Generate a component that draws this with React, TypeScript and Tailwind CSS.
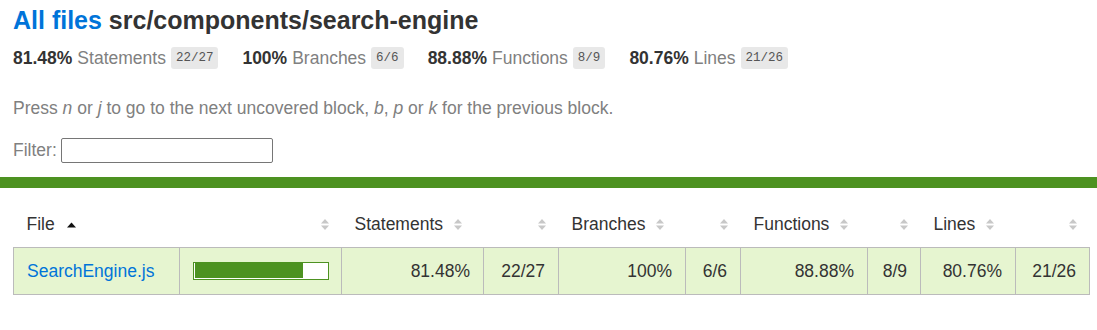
import React from "react";

function Sorter() {
  return (
    <svg width="8" height="13" viewBox="0 0 8 13" className="inline-block align-middle">
      <path d="M0 5.5 L4 1 L8 5.5 Z" fill="#c8c8c8" />
      <path d="M0 7.5 L4 12 L8 7.5 Z" fill="#c8c8c8" />
    </svg>
  );
}

function SortedUp() {
  return (
    <svg width="9" height="6" viewBox="0 0 9 6" className="inline-block align-middle">
      <path d="M0 5.5 L4.5 0.5 L9 5.5 Z" fill="#111" />
    </svg>
  );
}

function Badge({ children }: { children: React.ReactNode }) {
  return (
    <span className="ml-[5px] inline-block rounded-[3px] bg-[#e8e8e8] px-[5px] py-[4px] align-middle text-[12.5px] leading-[14px] text-[#555] [font-family:'Liberation_Mono',monospace]">
      {children}
    </span>
  );
}

function Stat({ pct, label, frac }: { pct: string; label: string; frac: string }) {
  return (
    <div className="mr-[24px] flex items-center whitespace-nowrap">
      <span className="font-bold text-[#333]">{pct}</span>
      <span className="ml-[5px] text-[#808080]">{label}</span>
      <Badge>{frac}</Badge>
    </div>
  );
}

export default function App() {
  const td = "border border-[#bbb] px-[13px] pt-[14px] pb-[13px] leading-[19px]";
  const th = "px-[13px] pt-[14px] pb-[13px] font-normal leading-[19px] whitespace-nowrap";
  return (
    <div className="w-[1097px] h-[330px] overflow-hidden bg-white text-[#333] [font-family:'Liberation_Sans',Arial,sans-serif]">
      <div className="px-[13px] pt-[6px]">
        <h1 className="text-[25px] font-bold leading-[28px] text-[#333]">
          <a className="text-[#0074d9]">All files</a> src/components/search-engine
        </h1>
        <div className="mt-[11px] flex items-center text-[17.5px]">
          <Stat pct="81.48%" label="Statements" frac="22/27" />
          <Stat pct="100%" label="Branches" frac="6/6" />
          <Stat pct="88.88%" label="Functions" frac="8/9" />
          <Stat pct="80.76%" label="Lines" frac="21/26" />
        </div>
        <p className="mt-[27px] text-[17.5px] leading-[20px] text-[#808080]">
          Press <em>n</em> or <em>j</em> to go to the next uncovered block, <em>b</em>, <em>p</em> or{" "}
          <em>k</em> for the previous block.
        </p>
        <div className="mt-[19px] flex items-center text-[17.5px] text-[#808080]">
          <span>Filter:</span>
          <input
            type="search"
            className="ml-[4px] h-[25px] w-[212px] rounded-[2px] border border-[#767676] bg-white outline-none"
          />
        </div>
      </div>
      <div className="mt-[13px] h-[11px] bg-[#4d9221]" />
      <div className="pl-[13px] pr-[7px] pt-[13px]">
        <table className="w-full table-fixed border-collapse text-[17.5px]">
          <colgroup>
            <col className="w-[166px]" />
            <col className="w-[162px]" />
            <col className="w-[142px]" />
            <col className="w-[75px]" />
            <col className="w-[127px]" />
            <col className="w-[55px]" />
            <col className="w-[127px]" />
            <col className="w-[53px]" />
            <col className="w-[95px]" />
            <col />
          </colgroup>
          <thead>
            <tr className="text-left">
              <th className={th}>
                File <span className="ml-[7px]"><SortedUp /></span>
              </th>
              <th className={`${th} text-right`}>
                <Sorter />
              </th>
              <th className={th}>
                Statements <span className="ml-[6px]"><Sorter /></span>
              </th>
              <th className={`${th} text-right`}>
                <Sorter />
              </th>
              <th className={th}>
                Branches <span className="ml-[6px]"><Sorter /></span>
              </th>
              <th className={`${th} text-right`}>
                <Sorter />
              </th>
              <th className={th}>
                Functions <span className="ml-[6px]"><Sorter /></span>
              </th>
              <th className={`${th} text-right`}>
                <Sorter />
              </th>
              <th className={th}>
                Lines <span className="ml-[6px]"><Sorter /></span>
              </th>
              <th className={`${th} text-right`}>
                <Sorter />
              </th>
            </tr>
          </thead>
          <tbody>
            <tr className="bg-[#e6f5d0]">
              <td className={`${td} whitespace-nowrap`}>
                <a className="text-[#0074d9]">SearchEngine.js</a>
              </td>
              <td className={td}>
                <div className="flex h-[18px] w-[136px] border border-[#4d9221] bg-white p-[1px] pt-0">
                  <div className="h-full bg-[#4d9221]" style={{ width: "81.48%" }} />
                </div>
              </td>
              <td className={`${td} text-right`}>81.48%</td>
              <td className={`${td} text-right`}>22/27</td>
              <td className={`${td} text-right`}>100%</td>
              <td className={`${td} text-right`}>6/6</td>
              <td className={`${td} text-right`}>88.88%</td>
              <td className={`${td} text-right`}>8/9</td>
              <td className={`${td} text-right`}>80.76%</td>
              <td className={`${td} text-right`}>21/26</td>
            </tr>
          </tbody>
        </table>
      </div>
    </div>
  );
}
